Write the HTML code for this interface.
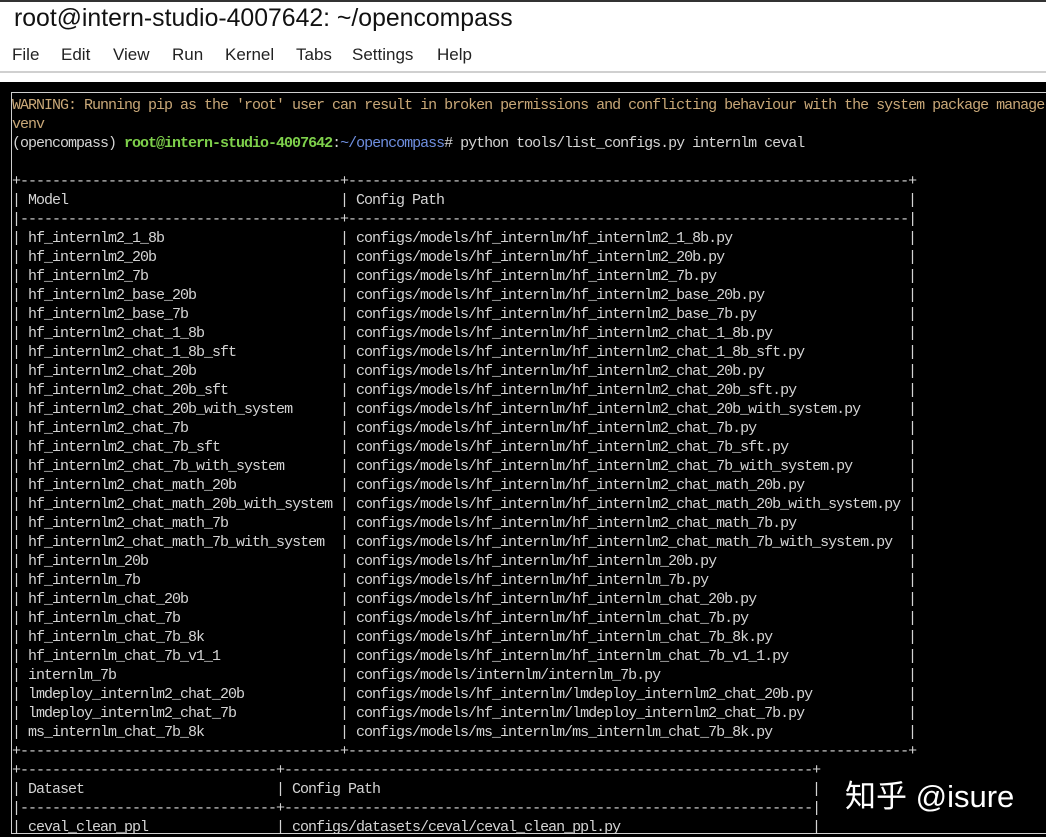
<!DOCTYPE html>
<html><head><meta charset="utf-8"><style>
*{margin:0;padding:0;box-sizing:border-box}
body{width:1046px;height:837px;overflow:hidden;background:#fff;position:relative;font-family:"Liberation Sans",sans-serif}
#top{position:absolute;left:0;top:0;width:1046px;height:2px;background:#333}
#title{position:absolute;left:14px;top:5px;font-size:24.8px;color:#111;white-space:nowrap}
.m{position:absolute;top:45px;font-size:17px;color:#222}
#mline{position:absolute;left:0;top:71px;width:1046px;height:2px;background:#d0d0d0}
#term{position:absolute;left:0;top:82px;width:1046px;height:755px;background:#000}
#box{position:absolute;left:11px;top:92px;width:1040px;height:742px;border:1px solid #cfcfcf}
#txt{position:absolute;left:12px;top:96px;font-family:"Liberation Mono",monospace;font-size:15px;letter-spacing:-1px;line-height:19px;color:#d4d4d4;white-space:pre}
.w{color:#c9a878}.g{color:#7ed04b;font-weight:bold}.b{color:#6f8fe0}
i{font-style:normal;display:inline-block}
.a{width:312px}.p{width:552px}.c{width:248px}.d{width:520px}
#wm{position:absolute;left:845px;top:771px;font-size:31px;color:#fff;font-family:"Liberation Sans","Noto Sans CJK SC",sans-serif}
</style></head><body>
<div id="top"></div>
<div id="title">root@intern-studio-4007642: ~/opencompass</div>
<div class="m" style="left:12px">File</div><div class="m" style="left:61px">Edit</div><div class="m" style="left:113px">View</div><div class="m" style="left:172px">Run</div><div class="m" style="left:225px">Kernel</div><div class="m" style="left:296px">Tabs</div><div class="m" style="left:352px">Settings</div><div class="m" style="left:437px">Help</div>
<div id="mline"></div>
<div id="term"></div>
<div id="box"></div>
<div id="txt"><div class="w">WARNING: Running pip as the 'root' user can result in broken permissions and conflicting behaviour with the system package manager</div><div class="w">venv</div><div>(opencompass) <span class="g">root@intern-studio-4007642</span>:<span class="b">~/opencompass</span># python tools/list_configs.py internlm ceval</div><div> </div><div>+----------------------------------------+----------------------------------------------------------------------+</div><div>| <i class="a">Model</i>| <i class="p">Config Path</i>|</div><div>|----------------------------------------+----------------------------------------------------------------------|</div><div>| <i class="a">hf_internlm2_1_8b</i>| <i class="p">configs/models/hf_internlm/hf_internlm2_1_8b.py</i>|</div><div>| <i class="a">hf_internlm2_20b</i>| <i class="p">configs/models/hf_internlm/hf_internlm2_20b.py</i>|</div><div>| <i class="a">hf_internlm2_7b</i>| <i class="p">configs/models/hf_internlm/hf_internlm2_7b.py</i>|</div><div>| <i class="a">hf_internlm2_base_20b</i>| <i class="p">configs/models/hf_internlm/hf_internlm2_base_20b.py</i>|</div><div>| <i class="a">hf_internlm2_base_7b</i>| <i class="p">configs/models/hf_internlm/hf_internlm2_base_7b.py</i>|</div><div>| <i class="a">hf_internlm2_chat_1_8b</i>| <i class="p">configs/models/hf_internlm/hf_internlm2_chat_1_8b.py</i>|</div><div>| <i class="a">hf_internlm2_chat_1_8b_sft</i>| <i class="p">configs/models/hf_internlm/hf_internlm2_chat_1_8b_sft.py</i>|</div><div>| <i class="a">hf_internlm2_chat_20b</i>| <i class="p">configs/models/hf_internlm/hf_internlm2_chat_20b.py</i>|</div><div>| <i class="a">hf_internlm2_chat_20b_sft</i>| <i class="p">configs/models/hf_internlm/hf_internlm2_chat_20b_sft.py</i>|</div><div>| <i class="a">hf_internlm2_chat_20b_with_system</i>| <i class="p">configs/models/hf_internlm/hf_internlm2_chat_20b_with_system.py</i>|</div><div>| <i class="a">hf_internlm2_chat_7b</i>| <i class="p">configs/models/hf_internlm/hf_internlm2_chat_7b.py</i>|</div><div>| <i class="a">hf_internlm2_chat_7b_sft</i>| <i class="p">configs/models/hf_internlm/hf_internlm2_chat_7b_sft.py</i>|</div><div>| <i class="a">hf_internlm2_chat_7b_with_system</i>| <i class="p">configs/models/hf_internlm/hf_internlm2_chat_7b_with_system.py</i>|</div><div>| <i class="a">hf_internlm2_chat_math_20b</i>| <i class="p">configs/models/hf_internlm/hf_internlm2_chat_math_20b.py</i>|</div><div>| <i class="a">hf_internlm2_chat_math_20b_with_system</i>| <i class="p">configs/models/hf_internlm/hf_internlm2_chat_math_20b_with_system.py</i>|</div><div>| <i class="a">hf_internlm2_chat_math_7b</i>| <i class="p">configs/models/hf_internlm/hf_internlm2_chat_math_7b.py</i>|</div><div>| <i class="a">hf_internlm2_chat_math_7b_with_system</i>| <i class="p">configs/models/hf_internlm/hf_internlm2_chat_math_7b_with_system.py</i>|</div><div>| <i class="a">hf_internlm_20b</i>| <i class="p">configs/models/hf_internlm/hf_internlm_20b.py</i>|</div><div>| <i class="a">hf_internlm_7b</i>| <i class="p">configs/models/hf_internlm/hf_internlm_7b.py</i>|</div><div>| <i class="a">hf_internlm_chat_20b</i>| <i class="p">configs/models/hf_internlm/hf_internlm_chat_20b.py</i>|</div><div>| <i class="a">hf_internlm_chat_7b</i>| <i class="p">configs/models/hf_internlm/hf_internlm_chat_7b.py</i>|</div><div>| <i class="a">hf_internlm_chat_7b_8k</i>| <i class="p">configs/models/hf_internlm/hf_internlm_chat_7b_8k.py</i>|</div><div>| <i class="a">hf_internlm_chat_7b_v1_1</i>| <i class="p">configs/models/hf_internlm/hf_internlm_chat_7b_v1_1.py</i>|</div><div>| <i class="a">internlm_7b</i>| <i class="p">configs/models/internlm/internlm_7b.py</i>|</div><div>| <i class="a">lmdeploy_internlm2_chat_20b</i>| <i class="p">configs/models/hf_internlm/lmdeploy_internlm2_chat_20b.py</i>|</div><div>| <i class="a">lmdeploy_internlm2_chat_7b</i>| <i class="p">configs/models/hf_internlm/lmdeploy_internlm2_chat_7b.py</i>|</div><div>| <i class="a">ms_internlm_chat_7b_8k</i>| <i class="p">configs/models/ms_internlm/ms_internlm_chat_7b_8k.py</i>|</div><div>+----------------------------------------+----------------------------------------------------------------------+</div><div>+--------------------------------+------------------------------------------------------------------+</div><div>| <i class="c">Dataset</i>| <i class="d">Config Path</i>|</div><div>|--------------------------------+------------------------------------------------------------------|</div><div>| <i class="c">ceval_clean_ppl</i>| <i class="d">configs/datasets/ceval/ceval_clean_ppl.py</i>|</div></div>
<div id="wm">知乎 @isure</div>
</body></html>
